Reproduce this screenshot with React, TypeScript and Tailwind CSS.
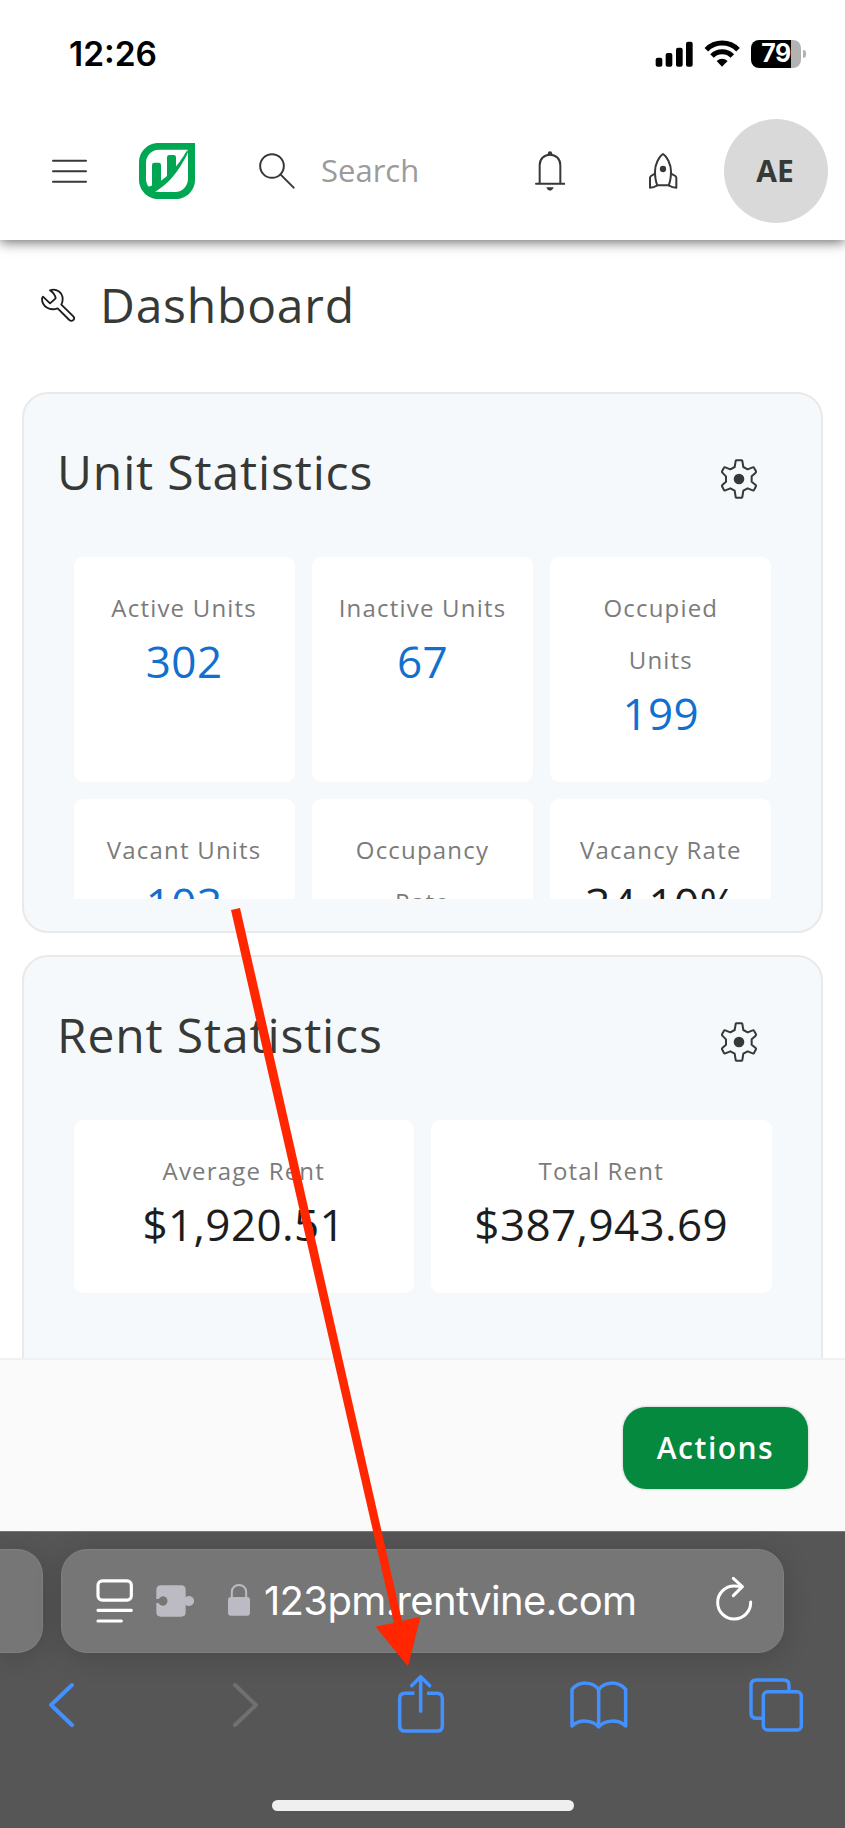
import type { ReactNode } from "react";

type Stat = { label: string; value: string; link?: boolean };

const unitStats: Stat[] = [
  { label: "Active Units", value: "302", link: true },
  { label: "Inactive Units", value: "67", link: true },
  { label: "Occupied Units", value: "199", link: true },
  { label: "Vacant Units", value: "103", link: true },
  { label: "Occupancy Rate", value: "65.89%" },
  { label: "Vacancy Rate", value: "34.10%" },
];

const rentStats: Stat[] = [
  { label: "Average Rent", value: "$1,920.51" },
  { label: "Total Rent", value: "$387,943.69" },
];

function StatusBar() {
  return (
    <div className="flex h-[107px] items-center pl-[69px] pr-[39px] text-black">
      <span className="pt-[2px] font-['Inter',sans-serif] text-[33.5px] font-semibold leading-none tracking-[0px]">12:26</span>
      <svg className="ml-auto h-[27px] w-[38px]" viewBox="697 118 114 81" fill="currentColor">
        <rect x="699" y="171" width="20" height="27" rx="6" />
        <rect x="729" y="157" width="20" height="41" rx="6" />
        <rect x="760" y="141" width="20" height="57" rx="6" />
        <rect x="790" y="123" width="20" height="75" rx="6" />
      </svg>
      <svg className="ml-[11px] h-[27px] w-[36px]" viewBox="844 118 108 81" fill="none" stroke="currentColor">
        <path d="M851 147A67 67 0 0 1 946 147" strokeWidth="15" />
        <path d="M868 166A43 43 0 0 1 929 166" strokeWidth="15" />
        <path d="M882 181Q898 167 915 181L898 198Z" fill="currentColor" stroke="none" />
      </svg>
      <div className="ml-[11px] flex h-[28px] w-[50px] items-center justify-center overflow-hidden rounded-[8px] bg-[linear-gradient(90deg,#000_79%,#b3b3b3_79%)]">
        <span className="font-['Inter',sans-serif] text-[25px] font-bold leading-none tracking-[-0.5px] text-white">79</span>
      </div>
      <div className="ml-[2px] h-[8px] w-[3px] rounded-r-full bg-[#b3b3b3]" />
    </div>
  );
}

function Logo() {
  return (
    <svg className="ml-[52px] h-[56px] w-[56px]" viewBox="417 430 168 168">
      <path d="M475 430H585V540C585 572 559 598 527 598H475C443 598 417 572 417 540V488C417 456 443 430 475 430Z" fill="#00a651" />
      <path d="M477 450H564V536C564 560 548 577 525 577H477C455 577 438 560 438 538V489C438 467 455 450 477 450Z" fill="#fff" />
      <path d="M436 563C500 552 545 480 562 450L564 458C548 495 510 555 463 577L440 582Z" fill="#00a651" />
      <path d="M456 565V496Q456 489 463 489H476Q483 489 483 496V550Z M501 540V473Q501 466 508 466H521Q528 466 528 473V515Z" fill="#00a651" />
    </svg>
  );
}

function Header() {
  return (
    <header className="relative z-10 h-[240px] bg-white shadow-[0_2px_12px_rgba(0,0,0,0.6)]">
      <StatusBar />
      <div className="mt-[12px] flex h-[104px] items-center pl-[52px] text-[#373936]">
        <svg className="h-[24px] w-[35px]" viewBox="156 477 105 72" fill="none" stroke="currentColor" strokeWidth="6" strokeLinecap="round">
          <path d="M159 482H258M159 513.500H258M159 545H258" />
        </svg>
        <Logo />
        <svg className="ml-[64px] h-[36px] w-[36px]" viewBox="777 458 108 108" fill="none" stroke="currentColor" strokeWidth="6" strokeLinecap="round">
          <circle cx="816" cy="497" r="35.500" />
          <path d="M842 523L881 562" />
        </svg>
        <span className="ml-[26px] w-[100px] pb-[2px] text-[31px] leading-none text-[#9b9b9b]">Search</span>
        <svg className="ml-[114px] h-[42px] w-[30px]" viewBox="340 452 90 126" fill="none" stroke="currentColor" strokeWidth="6" strokeLinecap="round">
          <path d="M354 552V498C354 478 368 466 385 466S416 478 416 498V552M343 553.500H428" />
          <circle cx="385" cy="462" r="6.500" fill="currentColor" stroke="none" />
          <path d="M374 564H396C394 570 390 574 385 574S376 570 374 564Z" fill="currentColor" stroke="none" />
        </svg>
        <svg className="ml-[83px] h-[38px] w-[30px]" viewBox="678 456 90 114" fill="none" stroke="currentColor" strokeWidth="6" strokeLinejoin="round">
          <path d="M723 462C735 469 747 494 747 514C747 530 745 545 740 556H706C701 545 699 530 699 514C699 494 711 469 723 462Z" />
          <path d="M700 520L687 528Q684 530 684 534V563Q695 563 706 556M746 520L760 528Q763 530 763 534V563Q751 563 740 556" />
          <circle cx="723" cy="507" r="9.500" fill="currentColor" stroke="none" />
        </svg>
        <div className="ml-[46px] flex h-[104px] w-[104px] items-center justify-center rounded-full bg-[#d9d9d9] pb-[2px] pr-[2px] text-[30px] font-bold">AE</div>
      </div>
    </header>
  );
}

function Gear() {
  return (
    <svg className="h-[40px] w-[38px]" viewBox="894 236 114 120" fill="none" stroke="#373936" strokeWidth="6" strokeLinejoin="round">
      <path d="M943 240H959Q961 240 961 242L964 260L977 267L992 261Q995 260 996 262L1002 273Q1003 275 1001 277L989 288V304L1001 314Q1003 316 1002 318L996 329Q995 331 992 330L977 324L964 331L961 350Q961 352 959 352H943Q941 352 941 350L938 331L925 324L910 330Q907 331 906 329L900 318Q899 316 901 314L912 304V288L901 277Q899 275 900 273L906 262Q907 260 910 261L925 267L938 260L941 242Q941 240 943 240Z" />
      <circle cx="951" cy="296" r="16" fill="#373936" stroke="none" />
    </svg>
  );
}

function Tile({ stat }: { stat: Stat }) {
  return (
    <div className="rounded-[9px] bg-white px-[22px] pb-[44px] pt-[25px] text-center leading-[52px]">
      <div className="whitespace-normal text-[24px] tracking-[1.2px] text-[#7b7b7b]">{stat.label}</div>
      <div className={stat.link ? "-mx-[22px] -mb-px pt-px text-[44px] tracking-[0.4px] text-[#1170cf]" : "-mx-[22px] -mb-px pt-px text-[44px] tracking-[0.4px] text-[#1d1d1d]"}>{stat.value}</div>
    </div>
  );
}

function Card({ title, children }: { title: string; children: ReactNode }) {
  return (
    <section className="h-[541px] rounded-[26px] border-2 border-[#e9e9e9] bg-[#f5f9fc]">
      <div className="flex h-[163px] items-center justify-between pl-[33px] pr-[63px]">
        <h2 className="pb-[7px] text-[48px] leading-none tracking-[0.85px] text-[#373936]">{title}</h2>
        <div className="pt-[6px]"><Gear /></div>
      </div>
      {children}
    </section>
  );
}

function BrowserBar() {
  return (
    <footer className="h-[297px] shrink-0 border-t border-[#777] bg-[#565656]">
      <div className="flex pt-[17px]">
        <div className="h-[104px] w-[43px] rounded-r-[26px] border border-l-0 border-[#808080] bg-[#767676] shadow-[0_4px_28px_rgba(0,0,0,0.16)]" />
        <div className="ml-[18px] flex h-[104px] w-[723px] items-center rounded-[26px] border border-[#808080] bg-[#767676] pl-[34px] text-white shadow-[0_4px_28px_rgba(0,0,0,0.16)]">
          <svg className="h-[44px] w-[37px]" viewBox="289 178 111 132" fill="none" stroke="currentColor" strokeWidth="9.500" strokeLinecap="round">
            <rect x="295" y="183.500" width="100" height="58" rx="13" />
            <path d="M295 272H395M295 304H365" />
          </svg>
          <svg className="ml-[23px] h-[32px] w-[39px]" viewBox="469 195 117 96" fill="#bcbac2">
            <path d="M484 196H545Q558 196 558 210V232A15 15 0 1 1 558 254V277Q558 290 545 290H484Q470 290 470 277V249H477A14 14 0 1 0 477 237H470V210Q470 196 484 196Z" />
          </svg>
          <svg className="-mt-[3px] ml-[32px] h-[33px] w-[24px]" viewBox="681 191 72 99" fill="none" stroke="#bcbac2">
            <rect x="684" y="233" width="66" height="56" rx="9" fill="#bcbac2" stroke="none" />
            <path d="M695.500 238V218C695.500 190 738.500 190 738.500 218V238" strokeWidth="6" />
          </svg>
          <span className="ml-[13px] w-[400px] whitespace-nowrap font-['Inter',sans-serif] text-[40px] leading-none tracking-[-0.65px]">123pm.rentvine.com</span>
          <svg className="-mt-[5px] ml-[51px] h-[45px] w-[39px]" viewBox="879 168 117 135" fill="none" stroke="currentColor" strokeWidth="9" strokeLinecap="round" strokeLinejoin="round">
            <path d="M986 246A49.500 49.500 0 1 1 936.500 198Q948 198 960 200" />
            <path d="M934 175L961 200L934 227" />
          </svg>
        </div>
      </div>
      <div className="flex h-[70px] items-center pl-[48px] pt-[33px] text-[#4391ff]">
        <svg className="h-[46px] w-[28px]" viewBox="144 486 84 138" fill="none" stroke="currentColor" strokeWidth="12" strokeLinecap="round" strokeLinejoin="round">
          <path d="M216 495L153 555L216 615" />
        </svg>
        <svg className="ml-[156px] h-[46px] w-[28px]" viewBox="696 486 84 138" fill="none" stroke="#707070" strokeWidth="12" strokeLinecap="round" strokeLinejoin="round">
          <path d="M705 495L768 555L705 615" />
        </svg>
        <svg className="-mt-[2px] ml-[137px] h-[60px] w-[48px]" viewBox="1191 462 144 180" fill="none" stroke="currentColor" strokeWidth="10.500">
          <path d="M1243 520H1215Q1199 520 1199 536V617Q1199 633 1215 633H1311Q1327 633 1327 617V536Q1327 520 1311 520H1281" />
          <path d="M1262 574V471M1235 497L1262 470L1289 497" strokeLinecap="round" strokeLinejoin="round" />
        </svg>
        <svg className="ml-[124px] h-[50px] w-[60px]" viewBox="440 481 180 150" fill="none" stroke="currentColor" strokeWidth="10.500" strokeLinejoin="round">
          <path d="M449 619V509C470 484 510 484 529 510C548 484 588 484 610 509V619C588 599 548 599 529 622C510 599 470 599 449 619ZM529 510V620" />
        </svg>
        <svg className="ml-[119px] h-[56px] w-[56px]" viewBox="978 472 168 168" fill="none" stroke="currentColor" strokeWidth="10.500">
          <rect x="1024" y="516" width="114" height="115" rx="13" />
          <path d="M1020 596H1003Q987 596 987 580V497Q987 481 1003 481H1085Q1101 481 1101 497V512" />
        </svg>
      </div>
      <div className="ml-[272px] mt-[77px] h-[11px] w-[302px] rounded-full bg-[#efefef]" />
    </footer>
  );
}

function Pointer() {
  return (
    <svg className="pointer-events-none absolute left-0 top-0 z-20 h-[1828px] w-[845px]" viewBox="0 0 845 1828" fill="#ff2600">
      <path d="M231 910L240 908L402 1621L420.500 1616.500L408 1666.500L375.500 1626.500L394 1623Z" />
    </svg>
  );
}

export default function App() {
  return (
    <div className="relative flex h-[1828px] w-[845px] flex-col overflow-hidden bg-white font-['Open_Sans',sans-serif]">
      <Header />
      <main className="h-[1118px] overflow-hidden px-[22px]">
        <div className="flex h-[152px] items-center pb-[22px] pl-[19px]">
          <svg className="h-[34px] w-[36px]" viewBox="122 114 108 102" fill="none" stroke="#1d1d1d" strokeWidth="5.500" strokeLinejoin="round">
            <path d="M149 121C168 114 187 127 187 148Q187 156 183 164L219 199Q224 205 219 210Q213 215 207 210L172 175C148 184 125 169 125 147Q125 143 128 140L149 160L166 145Q164 131 149 121Z" />
          </svg>
          <h1 className="ml-[23px] text-[48px] leading-none tracking-[0.8px] text-[#373936]">Dashboard</h1>
        </div>
        <div className="flex flex-col gap-[22px]">
          <Card title="Unit Statistics">
            <div className="ml-[49.5px] grid h-[342px] w-[698px] grid-cols-3 content-start gap-[17px] overflow-hidden">
              {unitStats.map((s) => <Tile key={s.label} stat={s} />)}
            </div>
          </Card>
          <Card title="Rent Statistics">
            <div className="ml-[49.5px] grid w-[698px] grid-cols-2 gap-[17px]">
              {rentStats.map((s) => <Tile key={s.label} stat={s} />)}
            </div>
          </Card>
        </div>
      </main>
      <div className="flex h-[173px] shrink-0 items-center justify-end border-t-2 border-[#f1f1f1] bg-[#fafafa] pr-[37px] pt-[4px]">
        <button className="h-[82px] w-[185px] rounded-[23px] bg-[#04893f] text-[30px] font-semibold tracking-[1.5px] text-white shadow-[0_0_2px_1px_rgba(0,0,0,0.12)]">Actions</button>
      </div>
      <BrowserBar />
      <Pointer />
    </div>
  );
}
